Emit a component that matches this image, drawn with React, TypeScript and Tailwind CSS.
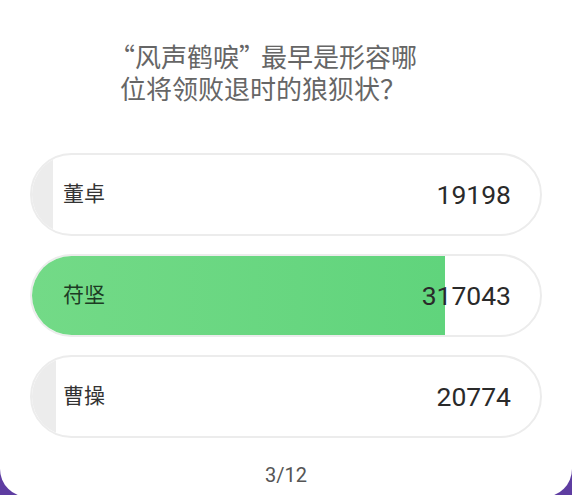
const options = [
  { name: '董卓', votes: 19198, fill: 21, chosen: false },
  { name: '苻坚', votes: 317043, fill: 413, chosen: true },
  { name: '曹操', votes: 20774, fill: 24, chosen: false },
];

export default function App() {
  return (
    <div
      className="h-[495px] w-[572px] overflow-hidden bg-[#5e3da1]"
      style={{ fontFamily: 'Roboto, "Noto Sans CJK SC", sans-serif' }}
    >
      <div className="flex h-[497px] flex-col rounded-b-[28px] bg-white">
        {/* question */}
        <div
          className="mt-[40px] ml-[120px] flex flex-col text-[26px] leading-[32px] text-[#666666]"
          style={{ fontFamily: '"Noto Sans CJK SC", sans-serif' }}
        >
          <div className="flex">
            <span className="-ml-[11px]">“</span>
            <span>风声鹤唳</span>
            <span className="-mr-[4px]">”</span>
            <span>最早是形容哪</span>
          </div>
          <div>位将领败退时的狼狈状？</div>
        </div>

        {/* answers */}
        <div className="mt-[49px] flex flex-col gap-[18px] px-[30px]">
          {options.map((o) => (
            <div
              key={o.name}
              className="relative flex h-[83px] items-center justify-between overflow-hidden rounded-full border-2 border-[#ececec] bg-white pr-[29px] pl-[31px]"
            >
              <div
                className={`absolute inset-y-0 left-0 ${
                  o.chosen ? 'bg-gradient-to-r from-[#73da87] to-[#60d47c]' : 'bg-[#ececec]'
                }`}
                style={{ width: o.fill }}
              />
              <span
                className={`relative text-[21px] ${o.chosen ? 'text-[#1d3b24]' : 'text-[#333333]'}`}
              >
                {o.name}
              </span>
              <span className="relative text-[26.5px] text-[#2a2a2a]">{o.votes}</span>
            </div>
          ))}
        </div>

        {/* progress */}
        <div className="mt-[22px] text-center text-[20px] text-[#555555]">3/12</div>
      </div>
    </div>
  );
}
